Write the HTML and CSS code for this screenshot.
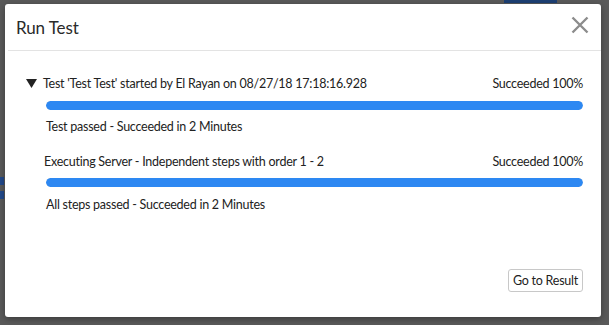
FILE: index.html
```html
<!DOCTYPE html>
<html>
<head>
<meta charset="utf-8">
<link rel="stylesheet" href="styles.css">
</head>
<body>
<div class="backdrop">
  <div class="bg-btn"></div>
  <div class="bg-strip s1"></div>
  <div class="bg-strip s2"></div>
  <div class="modal">
    <div class="header">
      <div class="title">Run Test</div>
      <svg class="close" width="18" height="18" viewBox="0 0 18 18"><path d="M1.5 1.5 L16.5 16.5 M16.5 1.5 L1.5 16.5" stroke="#8c8c8c" stroke-width="2.4" fill="none"/></svg>
    </div>
    <div class="body">
      <div class="row-head">
        <svg class="tri" width="11" height="9" viewBox="0 0 11 9"><polygon points="0,0 11,0 5.5,9" fill="#222"/></svg>
        <span class="label">Test 'Test Test' started by El Rayan on 08/27/18 17:18:16.928</span>
        <span class="status">Succeeded 100%</span>
      </div>
      <div class="bar b1"><div class="fill" style="width:100%"></div></div>
      <div class="msg m1">Test passed - Succeeded in 2 Minutes</div>
      <div class="row-head sub">
        <span class="label">Executing Server - Independent steps with order 1 - 2</span>
        <span class="status">Succeeded 100%</span>
      </div>
      <div class="bar b2"><div class="fill" style="width:100%"></div></div>
      <div class="msg m2">All steps passed - Succeeded in 2 Minutes</div>
      <div class="footer">
        <button class="btn">Go to Result</button>
      </div>
    </div>
  </div>
</div>
</body>
</html>
```
FILE: styles.css
```css
html, body {
  margin: 0;
  padding: 0;
}
body {
  width: 609px;
  height: 325px;
  overflow: hidden;
  font-family: Lato, "Liberation Sans", sans-serif;
  color: #222;
}
.backdrop {
  position: relative;
  width: 609px;
  height: 325px;
  background: #5a5a5a;
  padding: 4px 8px 8px 5px;
  box-sizing: border-box;
}
.bg-btn {
  position: absolute;
  left: 504px;
  top: 0;
  width: 53px;
  height: 3px;
  background: #1d3f73;
}
.bg-strip {
  position: absolute;
  left: 0;
  width: 4px;
  height: 8px;
  background: #22498a;
}
.s1 { top: 177px; }
.s2 { top: 191px; }
.modal {
  position: relative;
  width: 596px;
  height: 313px;
  background: #fff;
  border-radius: 3px;
  box-shadow: 0 2px 6px rgba(0,0,0,0.35);
  display: flex;
  flex-direction: column;
}
.header {
  height: 46px;
  margin-left: 3px;
  border-bottom: 1px solid #e3e3e3;
  display: flex;
  align-items: center;
  justify-content: space-between;
  padding: 0 12px 0 8px;
}
.title {
  font-size: 17px;
  color: #2a2a2a;
  letter-spacing: -0.1px;
}
.close {
  display: block;
  margin-top: -4px;
}
.body {
  flex: 1;
  display: flex;
  flex-direction: column;
  padding: 0 18px 25px 21px;
}
.row-head {
  display: flex;
  align-items: center;
  height: 16px;
  margin-top: 24px;
  font-size: 12.5px;
  letter-spacing: -0.25px;
}
.row-head .tri {
  margin-right: 6px;
}
.row-head .status {
  margin-left: auto;
}
.row-head.sub {
  margin-top: 18px;
  padding-left: 18px;
}
.bar {
  margin-left: 20px;
  height: 9px;
  border-radius: 5px;
  background: #e6e6e6;
  overflow: hidden;
}
.fill {
  height: 100%;
  background: #2d88f2;
  border-radius: 5px;
}
.b1 { margin-top: 10px; }
.b2 { margin-top: 9px; }
.msg {
  margin-left: 20px;
  height: 16px;
  line-height: 16px;
  font-size: 12.5px;
  letter-spacing: -0.25px;
}
.m1 { margin-top: 9px; }
.m2 { margin-top: 10px; }
.footer {
  margin-top: auto;
  display: flex;
  justify-content: flex-end;
}
.btn {
  font-family: Lato, "Liberation Sans", sans-serif;
  font-size: 12.5px;
  letter-spacing: -0.25px;
  color: #222;
  background: #fff;
  border: 1px solid #c8c8c8;
  border-radius: 3px;
  width: 75px;
  height: 23px;
  padding: 0;
}
```
